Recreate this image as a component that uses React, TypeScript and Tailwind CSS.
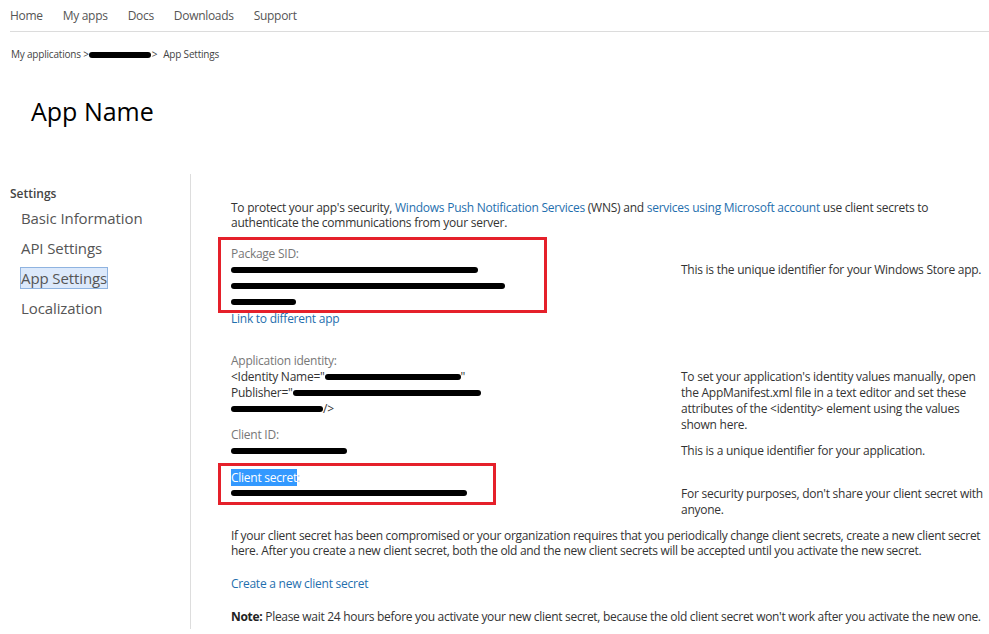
import React from "react";

const font = { fontFamily: '"Open Sans", "Noto Sans", sans-serif' };

// black marker strokes that hide the private values
function Redact({ w, className = "" }: { w: string; className?: string }) {
  return <span className={`inline-block h-[6px] rounded-full bg-black align-middle ${w} ${className}`} />;
}

function A({ children }: { children: React.ReactNode }) {
  return <a className="text-[#1f6fae] cursor-pointer">{children}</a>;
}

const nav = ["Home", "My apps", "Docs", "Downloads", "Support"];
const side = ["Basic Information", "API Settings", "App Settings", "Localization"];

export default function App() {
  return (
    <div className="min-h-screen w-full bg-white text-[#333]" style={font}>
      {/* top nav */}
      <div className="ml-[10px] flex h-[32px] items-center gap-[20px] border-b border-[#dcdcdc] pt-[1px] text-[12px] tracking-[-0.3px] text-[#555]">
        {nav.map((n) => (
          <span key={n}>{n}</span>
        ))}
      </div>

      {/* breadcrumb */}
      <div className="ml-[11px] mt-[15px] flex items-center text-[10px] tracking-[-0.2px] text-[#444]">
        <span>My applications &gt;</span>
        <Redact w="w-[62px]" className="h-[4px]" />
        <span className="ml-[1px]">&gt;</span>
        <span className="ml-[6px]">App Settings</span>
      </div>

      <h1 className="ml-[31px] mt-[32px] text-[25px] leading-[34px] text-black">App Name</h1>

      <div className="mt-[46px] flex">
        {/* sidebar */}
        <aside className="h-[455px] w-[191px] shrink-0 border-r border-[#ddd] pt-[11px]">
          <div className="ml-[10px] text-[12px] font-semibold text-[#444]">Settings</div>
          <ul className="text-[15px] tracking-[-0.1px] text-[#555]">
            {side.map((s) => (
              <li key={s} className="flex h-[30px] items-center pl-[21px]">
                <span
                  className={
                    s === "App Settings"
                      ? "-ml-[1px] border border-[#8fb3e0] bg-[#dce9fb] leading-[20px]"
                      : "leading-[20px]"
                  }
                >
                  {s}
                </span>
              </li>
            ))}
          </ul>
        </aside>

        {/* content */}
        <main className="pl-[40px] pt-[26px] text-[12px] leading-[15px] tracking-[-0.25px]">
          <p className="w-[720px]">
            To protect your app's security, <A>Windows Push Notification Services</A> (WNS) and{" "}
            <A>services using Microsoft account</A> use client secrets to authenticate the communications from
            your server.
          </p>

          {/* package sid */}
          <div className="mt-[7px] flex leading-[16px]">
            <div className="w-[450px] shrink-0">
              <div className="-ml-[13px] h-[76px] w-[329px] border-[3px] border-[#e5202a] pl-[10px] pt-[6px]">
                <div className="text-[#777]">Package SID:</div>
                <div className="flex h-[16px] items-center">
                  <Redact w="w-[247px]" />
                </div>
                <div className="flex h-[16px] items-center">
                  <Redact w="w-[274px]" />
                </div>
                <div className="flex h-[16px] items-center">
                  <Redact w="w-[65px]" />
                </div>
              </div>
              <div className="-mt-[2px]">
                <A>Link to different app</A>
              </div>
            </div>
            <div className="w-[310px] shrink-0 pt-[25px]">This is the unique identifier for your Windows Store app.</div>
          </div>

          {/* identity */}
          <div className="mt-[26px] flex leading-[16px]">
            <div className="w-[450px] shrink-0">
              <div className="text-[#777]">Application identity:</div>
              <div className="flex items-center">
                &lt;Identity Name="<Redact w="w-[136px]" />"
              </div>
              <div className="flex items-center">
                Publisher="<Redact w="w-[188px]" />
              </div>
              <div className="flex items-center">
                <Redact w="w-[92px]" />
                /&gt;
              </div>
              <div className="mt-[10px] text-[#777]">Client ID:</div>
              <div className="flex h-[16px] items-center">
                <Redact w="w-[116px]" />
              </div>
            </div>
            <div className="w-[310px] shrink-0 pt-[16px]">
              <p>
                To set your application's identity values manually, open the AppManifest.xml file in a text editor
                and set these attributes of the &lt;identity&gt; element using the values shown here.
              </p>
              <p className="mt-[10px]">This is a unique identifier for your application.</p>
            </div>
          </div>

          {/* client secret */}
          <div className="mt-[4px] flex leading-[16px]">
            <div className="w-[450px] shrink-0">
              <div className="-ml-[13px] h-[42px] w-[278px] border-[3px] border-[#e5202a] pl-[10px] pt-[4px] leading-[15px]">
                <div>
                  <span className="bg-[#3399ff] text-white">Client secret</span>
                  <span className="text-[#aac8ef]">:</span>
                </div>
                <div className="flex h-[15px] items-center">
                  <Redact w="w-[236px]" />
                </div>
              </div>
            </div>
            <div className="w-[310px] shrink-0 pt-[23px]">
              For security purposes, don't share your client secret with anyone.
            </div>
          </div>

          <p className="mt-[10px] w-[760px] tracking-[-0.3px]">
            If your client secret has been compromised or your organization requires that you periodically change
            client secrets, create a new client secret here. After you create a new client secret, both the old and
            the new client secrets will be accepted until you activate the new secret.
          </p>

          <div className="mt-[18px] leading-[16px]">
            <A>Create a new client secret</A>
          </div>

          <p className="mt-[17px] w-[760px] tracking-[-0.3px]">
            <b className="text-[#222]">Note:</b> Please wait 24 hours before you activate your new client secret,
            because the old client secret won't work after you activate the new one.
          </p>
        </main>
      </div>
    </div>
  );
}
